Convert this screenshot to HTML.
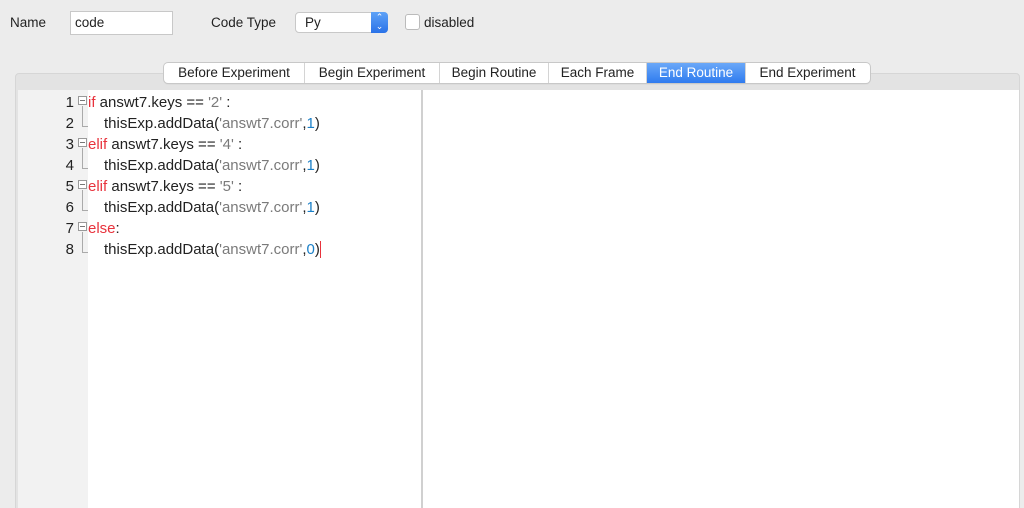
<!DOCTYPE html>
<html><head><style>
html,body{margin:0;width:1024px;height:508px;overflow:hidden}
body{background:#ececec;font-family:"Liberation Sans",Arial,sans-serif;font-size:13.5px;color:#222;position:relative}
.a{position:absolute}
.code{font-size:15px;line-height:21px}
.k{color:#e8323c}.s{color:#7a7a7a}.n{color:#1a7fc7}
.i{display:inline-block;width:16px}
.ln{position:absolute;left:40px;width:34px;text-align:right;font-size:15px}
.fb{position:absolute;left:78px;width:7px;height:7px;border:1px solid #999;background:#fff}
.fb:after{content:"";position:absolute;left:1px;top:3px;width:5px;height:1px;background:#777}
.fl{position:absolute;left:82px;width:1px;height:12px;background:#aaa}
.fl:after{content:"";position:absolute;left:0;bottom:0;width:6px;height:1px;background:#aaa}
.tab{position:absolute;top:63px;height:20px;line-height:20px;text-align:center;border-right:1px solid #d4d4d4;font-size:13.5px;color:#222}
</style></head><body>
<div class="a" style="left:10px;top:15px">Name</div>
<div class="a" style="left:70px;top:11px;width:103px;height:24px;background:#fff;border:1px solid #c8c8c8;box-sizing:border-box;padding-left:4px;line-height:22px">code</div>
<div class="a" style="left:211px;top:15px">Code Type</div>
<div class="a" style="left:295px;top:12px;width:93px;height:21px;background:#fff;border:1px solid #c8c8c8;border-radius:4px;box-sizing:border-box;padding-left:9px;line-height:19px">Py</div>
<div class="a" style="left:371px;top:12px;width:17px;height:21px;background:linear-gradient(#5ea2f7,#2a72e8);border-radius:0 4px 4px 0;color:#fff;font-size:9px;text-align:center;line-height:9px;padding-top:1px;box-sizing:border-box">⌃<br>⌄</div>
<div class="a" style="left:405px;top:14px;width:15px;height:16px;background:#fff;border:1px solid #bbb;border-radius:3px;box-sizing:border-box"></div>
<div class="a" style="left:424px;top:15px">disabled</div>

<div class="a" style="left:15px;top:73px;width:1005px;height:440px;background:#e3e3e3;border:1px solid #d6d6d6;border-radius:4px;box-sizing:border-box"></div>
<div class="a" style="left:18px;top:90px;width:70px;height:420px;background:#f2f2f2"></div>
<div class="a" style="left:88px;top:90px;width:333px;height:420px;background:#fff"></div>
<div class="a" style="left:421px;top:90px;width:2px;height:420px;background:#d0d0d0"></div>
<div class="a" style="left:423px;top:90px;width:596px;height:420px;background:#fff"></div>

<div class="a" style="left:164px;top:63px;width:706px;height:20px;background:#fff;border-radius:4px;box-shadow:0 0 0 1px #c8c8c8,0 1px 1px #bbb"></div>
<div class="tab" style="left:164px;width:140px">Before Experiment</div>
<div class="tab" style="left:305px;width:134px">Begin Experiment</div>
<div class="tab" style="left:440px;width:108px">Begin Routine</div>
<div class="tab" style="left:549px;width:97px">Each Frame</div>
<div class="tab" style="left:647px;width:98px;background:linear-gradient(#6aa8f8,#2f7bef);color:#fff">End Routine</div>
<div class="tab" style="left:746px;width:123px;border:none">End Experiment</div>

<div class="ln" style="top:92px;line-height:21px">1</div><div class="ln" style="top:113px;line-height:21px">2</div>
<div class="ln" style="top:134px;line-height:21px">3</div><div class="ln" style="top:155px;line-height:21px">4</div>
<div class="ln" style="top:176px;line-height:21px">5</div><div class="ln" style="top:197px;line-height:21px">6</div>
<div class="ln" style="top:218px;line-height:21px">7</div><div class="ln" style="top:239px;line-height:21px">8</div>
<div class="fb" style="top:96px"></div><div class="fl" style="top:106px;height:21px"></div>
<div class="fb" style="top:138px"></div><div class="fl" style="top:148px;height:21px"></div>
<div class="fb" style="top:180px"></div><div class="fl" style="top:190px;height:21px"></div>
<div class="fb" style="top:222px"></div><div class="fl" style="top:232px;height:21px"></div>

<div class="a code" style="left:88px;top:92px;white-space:pre"><span class="k">if</span> answt7.keys == <span class="s">'2'</span> :
<span class="i"></span>thisExp.addData(<span class="s">'answt7.corr'</span>,<span class="n">1</span>)
<span class="k">elif</span> answt7.keys == <span class="s">'4'</span> :
<span class="i"></span>thisExp.addData(<span class="s">'answt7.corr'</span>,<span class="n">1</span>)
<span class="k">elif</span> answt7.keys == <span class="s">'5'</span> :
<span class="i"></span>thisExp.addData(<span class="s">'answt7.corr'</span>,<span class="n">1</span>)
<span class="k">else</span>:
<span class="i"></span>thisExp.addData(<span class="s">'answt7.corr'</span>,<span class="n">0</span>)<span style="border-left:1px solid #e8323c"></span></div>
</body></html>
